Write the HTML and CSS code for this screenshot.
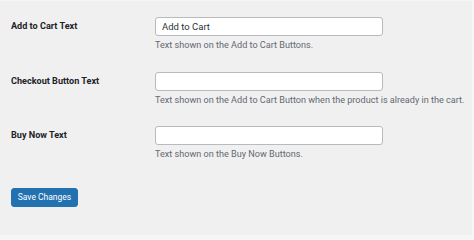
FILE: index.html
```html
<!DOCTYPE html>
<html>
<head>
<meta charset="utf-8">
<link rel="stylesheet" href="styles.css">
</head>
<body>
<div class="frame">
  <form class="settings">
    <div class="row">
      <label class="label" for="f1">Add to Cart Text</label>
      <div class="field">
        <input id="f1" class="input" type="text" value="Add to Cart">
        <p class="desc">Text shown on the Add to Cart Buttons.</p>
      </div>
    </div>
    <div class="row">
      <label class="label" for="f2">Checkout Button Text</label>
      <div class="field">
        <input id="f2" class="input" type="text" value="">
        <p class="desc">Text shown on the Add to Cart Button when the product is already in the cart.</p>
      </div>
    </div>
    <div class="row">
      <label class="label" for="f3">Buy Now Text</label>
      <div class="field">
        <input id="f3" class="input" type="text" value="">
        <p class="desc">Text shown on the Buy Now Buttons.</p>
      </div>
    </div>
    <div class="actions">
      <button type="button" class="btn">Save Changes</button>
    </div>
  </form>
</div>
</body>
</html>
```

FILE: styles.css
```css
html, body {
  margin: 0;
  padding: 0;
  background: #f6f6f7;
}
body {
  width: 474px;
  height: 238px;
  overflow: hidden;
  font-family: Roboto, "Liberation Sans", Arial, sans-serif;
  color: #1d2327;
}
.frame {
  width: 472px;
  height: 234px;
  background: #f0f0f1;
  margin-top: 1px;
  box-sizing: border-box;
}
.settings {
  padding: 16px 0 0 11px;
  display: flex;
  flex-direction: column;
}
.row {
  display: grid;
  grid-template-columns: 144px 228px;
  margin-bottom: 21px;
}
.row:nth-child(2) {
  margin-bottom: 20px;
}
.label {
  font-size: 9.1px;
  font-weight: bold;
  line-height: 19px;
  color: #1d2327;
}
.field {
  display: flex;
  flex-direction: column;
}
.input {
  box-sizing: border-box;
  width: 228px;
  height: 19px;
  margin: 0;
  padding: 0 6px;
  border: 1px solid #b8babe;
  border-radius: 3px;
  background: #fff;
  font-family: Roboto, "Liberation Sans", Arial, sans-serif;
  font-size: 9.5px;
  color: #2c3338;
  outline: none;
}
.desc {
  margin: 3px 0 0 0;
  font-size: 9.1px;
  line-height: 12px;
  color: #646970;
  white-space: nowrap;
}
.actions {
  padding-top: 4px;
}
.btn {
  width: 67px;
  height: 19px;
  padding: 0;
  border: 1px solid #2271b1;
  border-radius: 3px;
  background: #2271b1;
  color: #fff;
  font-family: Roboto, "Liberation Sans", Arial, sans-serif;
  font-size: 8.5px;
  line-height: 17px;
  cursor: pointer;
}
```
